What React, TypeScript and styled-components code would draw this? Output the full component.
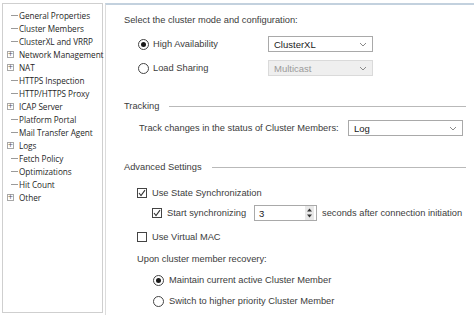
import styled, { createGlobalStyle } from 'styled-components';

const GlobalStyle = createGlobalStyle`
  html, body {
    margin: 0;
    padding: 0;
    background: #ffffff;
  }
  body {
    width: 474px;
    height: 315px;
    overflow: hidden;
  }
`;

type TreeNode = { label: string; expandable?: boolean };

const treeNodes: TreeNode[] = [
  { label: 'General Properties' },
  { label: 'Cluster Members' },
  { label: 'ClusterXL and VRRP' },
  { label: 'Network Management', expandable: true },
  { label: 'NAT', expandable: true },
  { label: 'HTTPS Inspection' },
  { label: 'HTTP/HTTPS Proxy' },
  { label: 'ICAP Server', expandable: true },
  { label: 'Platform Portal' },
  { label: 'Mail Transfer Agent' },
  { label: 'Logs', expandable: true },
  { label: 'Fetch Policy' },
  { label: 'Optimizations' },
  { label: 'Hit Count' },
  { label: 'Other', expandable: true },
];

const Chevron = () => (
  <svg width="8" height="5" viewBox="0 0 8 5">
    <polyline points="1,1 4,4 7,1" fill="none" stroke="#8a8a8a" strokeWidth="1" />
  </svg>
);

const Dropdown = ({ value, width, disabled }: { value: string; width: number; disabled?: boolean }) => (
  <SelectBox $width={width} $disabled={disabled}>
    <span>{value}</span>
    <Chevron />
  </SelectBox>
);

const Radio = ({ checked }: { checked?: boolean }) => (
  <RadioCircle>{checked && <RadioDot />}</RadioCircle>
);

const Check = ({ checked }: { checked?: boolean }) => (
  <CheckBox>
    {checked && (
      <svg width="8" height="8" viewBox="0 0 8 8">
        <polyline points="1,4 3,6.5 7,1.2" fill="none" stroke="#333" strokeWidth="1.1" />
      </svg>
    )}
  </CheckBox>
);

const SectionTitle = ({ title, mt }: { title: string; mt: number }) => (
  <Row $mt={mt}>
    <span>{title}</span>
    <Rule />
  </Row>
);

const App = () => {
  return (
    <>
      <GlobalStyle />
      <Window>
        <Sidebar>
          {treeNodes.map((node) => (
            <TreeItem key={node.label}>
              {node.expandable ? <PlusBox>+</PlusBox> : <Branch />}
              <TreeLabel>{node.label}</TreeLabel>
            </TreeItem>
          ))}
        </Sidebar>
        <Panel>
          <Row $mt={7}>Select the cluster mode and configuration:</Row>
          <Row $mt={8} $indent={14}>
            <Radio checked />
            <RadioLabel $width={119}>High Availability</RadioLabel>
            <Dropdown value="ClusterXL" width={105} />
          </Row>
          <Row $mt={8} $indent={14}>
            <Radio />
            <RadioLabel $width={119}>Load Sharing</RadioLabel>
            <Dropdown value="Multicast" width={105} disabled />
          </Row>

          <SectionTitle title="Tracking" mt={22} />
          <Row $mt={6} $indent={15}>
            <FixedLabel $width={209}>Track changes in the status of Cluster Members:</FixedLabel>
            <Dropdown value="Log" width={115} />
          </Row>

          <SectionTitle title="Advanced Settings" mt={23} />
          <Row $mt={10} $indent={13}>
            <Check checked />
            <CheckLabel>Use State Synchronization</CheckLabel>
          </Row>
          <Row $mt={4} $indent={28}>
            <Check checked />
            <FixedLabel $width={92} $pad={5}>Start synchronizing</FixedLabel>
            <Spinner>
              <span>3</span>
              <SpinButtons>
                <svg width="7" height="12" viewBox="0 0 7 12">
                  <polygon points="3.5,1.5 6,4.5 1,4.5" fill="#333" />
                  <polygon points="3.5,10.5 6,7.5 1,7.5" fill="#333" />
                </svg>
              </SpinButtons>
            </Spinner>
            <Trailing>seconds after connection initiation</Trailing>
          </Row>
          <Row $mt={8} $indent={13}>
            <Check />
            <CheckLabel>Use Virtual MAC</CheckLabel>
          </Row>
          <Row $mt={6} $indent={13}>Upon cluster member recovery:</Row>
          <Row $mt={5} $indent={29}>
            <Radio checked />
            <CheckLabel>Maintain current active Cluster Member</CheckLabel>
          </Row>
          <Row $mt={5} $indent={29}>
            <Radio />
            <CheckLabel>Switch to higher priority Cluster Member</CheckLabel>
          </Row>
        </Panel>
      </Window>
    </>
  );
};

export default App;

const Window = styled.div`
  display: flex;
  height: 315px;
  background: #ffffff;
`;

const Sidebar = styled.nav`
  width: 101px;
  flex-shrink: 0;
  margin: 3px 2px 2px 2px;
  border: 1px solid #cfcfcf;
  padding-top: 5px;
  box-sizing: border-box;
  font-family: 'Open Sans', 'Noto Sans', sans-serif;
  font-size: 8.2px;
  letter-spacing: -0.05px;
  color: #1f1f1f;
`;

const TreeItem = styled.div`
  display: flex;
  align-items: center;
  height: 13px;
  padding-left: 3px;
`;

const Branch = styled.span`
  width: 7px;
  margin-left: 5px;
  margin-right: 1px;
  border-top: 1px solid #9a9a9a;
  height: 0;
`;

const PlusBox = styled.span`
  width: 7px;
  height: 7px;
  margin-left: 1px;
  margin-right: 5px;
  border: 1px solid #a8a8a8;
  box-sizing: border-box;
  display: flex;
  align-items: center;
  justify-content: center;
  font-size: 7px;
  line-height: 1;
  color: #555;
  font-family: 'DejaVu Sans', sans-serif;
`;

const TreeLabel = styled.span`
  white-space: nowrap;
`;

const Panel = styled.main`
  flex: 1;
  margin-top: 3px;
  border-top: 2px solid #c3d1de;
  border-left: 1px solid #dcdcdc;
  padding-left: 18px;
  padding-right: 8px;
  font-family: 'Liberation Sans', Arial, sans-serif;
  font-size: 9.3px;
  color: #3c3c3c;
`;

const Row = styled.div<{ $mt: number; $indent?: number }>`
  display: flex;
  align-items: center;
  height: 16px;
  margin-top: ${(p) => p.$mt}px;
  padding-left: ${(p) => p.$indent ?? 0}px;
  white-space: nowrap;
`;

const Rule = styled.span`
  flex: 1;
  height: 0;
  margin-left: 10px;
  border-top: 1px solid #b9b9b9;
`;

const RadioCircle = styled.span`
  width: 11px;
  height: 11px;
  border: 1px solid #444;
  border-radius: 50%;
  box-sizing: border-box;
  display: flex;
  align-items: center;
  justify-content: center;
  flex-shrink: 0;
`;

const RadioDot = styled.span`
  width: 5px;
  height: 5px;
  border-radius: 50%;
  background: #1a1a1a;
`;

const RadioLabel = styled.span<{ $width: number }>`
  width: ${(p) => p.$width}px;
  padding-left: 4px;
  box-sizing: border-box;
`;

const FixedLabel = styled.span<{ $width: number; $pad?: number }>`
  width: ${(p) => p.$width}px;
  padding-left: ${(p) => p.$pad ?? 0}px;
  box-sizing: border-box;
`;

const CheckLabel = styled.span`
  padding-left: 5px;
`;

const CheckBox = styled.span`
  width: 10px;
  height: 10px;
  border: 1px solid #444;
  box-sizing: border-box;
  display: flex;
  align-items: center;
  justify-content: center;
  flex-shrink: 0;
`;

const SelectBox = styled.div<{ $width: number; $disabled?: boolean }>`
  width: ${(p) => p.$width}px;
  height: 16px;
  box-sizing: border-box;
  border: 1px solid ${(p) => (p.$disabled ? '#dadada' : '#a9a9a9')};
  background: ${(p) => (p.$disabled ? '#efefef' : '#ffffff')};
  color: ${(p) => (p.$disabled ? '#9a9a9a' : '#1a1a1a')};
  display: flex;
  align-items: center;
  justify-content: space-between;
  padding: 0 5px 0 5px;
  font-size: 9.5px;
`;

const Spinner = styled.div`
  width: 63px;
  height: 16px;
  box-sizing: border-box;
  border: 1px solid #a9a9a9;
  display: flex;
  align-items: center;
  justify-content: space-between;
  padding-left: 4px;
  color: #1a1a1a;
  font-size: 9.5px;
`;

const SpinButtons = styled.span`
  width: 9px;
  height: 14px;
  margin-right: 2px;
  background: #e8e8e8;
  display: flex;
  align-items: center;
  justify-content: center;
`;

const Trailing = styled.span`
  padding-left: 5px;
`;
